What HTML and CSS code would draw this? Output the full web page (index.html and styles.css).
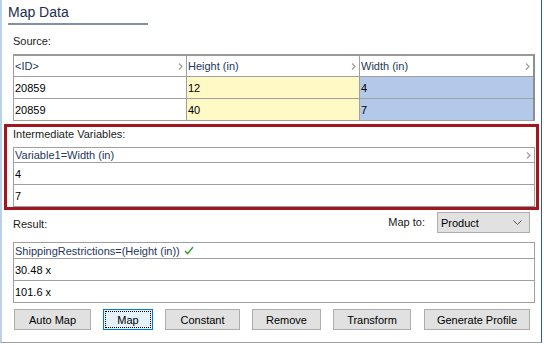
FILE: index.html
```html
<!DOCTYPE html>
<html>
<head>
<meta charset="utf-8">
<link rel="stylesheet" href="styles.css">
</head>
<body>
<div class="window">
  <div class="title">Map Data</div>
  <div class="label source-label">Source:</div>
  <div class="table source-table">
    <div class="row head-row">
      <div class="cell head"><span>&lt;ID&gt;</span><svg class="chev" width="5" height="7" viewBox="0 0 5 7"><polyline points="1,0.5 4,3.5 1,6.5" fill="none" stroke="#a0a0a0" stroke-width="1.3"/></svg></div>
      <div class="cell head"><span>Height (in)</span><svg class="chev" width="5" height="7" viewBox="0 0 5 7"><polyline points="1,0.5 4,3.5 1,6.5" fill="none" stroke="#a0a0a0" stroke-width="1.3"/></svg></div>
      <div class="cell head last"><span>Width (in)</span><svg class="chev" width="5" height="7" viewBox="0 0 5 7"><polyline points="1,0.5 4,3.5 1,6.5" fill="none" stroke="#a0a0a0" stroke-width="1.3"/></svg></div>
    </div>
    <div class="row">
      <div class="cell">20859</div>
      <div class="cell yellow">12</div>
      <div class="cell blue last">4</div>
    </div>
    <div class="row">
      <div class="cell">20859</div>
      <div class="cell yellow">40</div>
      <div class="cell blue last">7</div>
    </div>
  </div>

  <div class="inter-box">
    <div class="label inter-label">Intermediate Variables:</div>
    <div class="table single-table">
      <div class="row1 head-row small-head">
        <div class="cell head last"><span>Variable1=Width (in)</span><svg class="chev" width="5" height="7" viewBox="0 0 5 7"><polyline points="1,0.5 4,3.5 1,6.5" fill="none" stroke="#a0a0a0" stroke-width="1.3"/></svg></div>
      </div>
      <div class="row1"><div class="cell last">4</div></div>
      <div class="row1"><div class="cell last">7</div></div>
    </div>
  </div>

  <div class="result-bar">
    <div class="label result-label">Result:</div>
    <div class="label mapto-label">Map to:</div>
    <div class="dropdown">
      <span>Product</span>
      <svg width="9" height="5" viewBox="0 0 9 5"><polyline points="0.5,0.5 4.5,4.5 8.5,0.5" fill="none" stroke="#555" stroke-width="1"/></svg>
    </div>
  </div>

  <div class="table single-table result-table">
    <div class="row1 head-row small-head">
      <div class="cell head last"><span>ShippingRestrictions=(Height (in))</span><svg class="check" width="10" height="9" viewBox="0 0 10 9"><polyline points="1,5 3.6,7.6 9,1" fill="none" stroke="#3a9a3a" stroke-width="1.4"/></svg></div>
    </div>
    <div class="row1"><div class="cell last">30.48 x</div></div>
    <div class="row1"><div class="cell last">101.6 x</div></div>
  </div>

  <div class="buttons">
    <button class="btn b-auto">Auto Map</button>
    <button class="btn b-map focused"><span class="focus-ring">Map</span></button>
    <button class="btn b-const">Constant</button>
    <button class="btn b-remove">Remove</button>
    <button class="btn b-trans">Transform</button>
    <button class="btn b-gen">Generate Profile</button>
  </div>
</div>
</body>
</html>
```

FILE: styles.css
```css
html, body {
  margin: 0;
  padding: 0;
  background: #ffffff;
}
body {
  font-family: "Liberation Sans", Arial, sans-serif;
  font-size: 11px;
  color: #000;
}
.window {
  box-sizing: border-box;
  width: 542px;
  height: 343px;
  border-left: 2px solid #b9d1ea;
  border-right: 1px solid #2d5a9b;
  border-bottom: 1px solid #a0a0a0;
  display: flex;
  flex-direction: column;
  background: #fff;
}
.title {
  margin-left: 6px;
  width: 140px;
  height: 19px;
  padding-top: 4px;
  line-height: 16px;
  font-size: 14px;
  color: #1c2f4d;
  border-bottom: 2px solid #8191a6;
}
.label {
  line-height: 13px;
  color: #1a1a1a;
}
.source-label {
  margin-left: 11px;
  margin-top: 10px;
}
.table {
  box-sizing: border-box;
  margin-left: 11px;
  width: 522px;
  border: 1px solid #a0a0a0;
}
.source-table {
  margin-top: 6px;
  border-top: 2px solid #9a9a9a;
  border-right: 2px solid #8e8e8e;
}
.row {
  display: grid;
  grid-template-columns: 173px 173px 1fr;
  height: 21px;
  border-bottom: 1px solid #a0a0a0;
}
.row:last-child {
  border-bottom: none;
}
.source-table .head-row {
  height: 20px;
}
.cell {
  box-sizing: border-box;
  border-right: 1px solid #a0a0a0;
  display: flex;
  align-items: center;
  padding-left: 1px;
  white-space: nowrap;
}
.cell.last {
  border-right: none;
}
.cell.head {
  color: #23375c;
  justify-content: space-between;
  padding-right: 3px;
}
.yellow {
  background: #fff9c6;
}
.blue {
  background: #b2c9e9;
}
.inter-box {
  box-sizing: border-box;
  margin-top: 3px;
  margin-left: 2px;
  width: 535px;
  height: 86px;
  border: 3px solid #a2171f;
  padding: 1px 1px 0 6px;
}
.inter-box .table {
  margin-left: 0;
  margin-top: 6px;
}
.row1 {
  height: 21px;
  border-bottom: 1px solid #a0a0a0;
  display: flex;
}
.row1:last-child {
  border-bottom: none;
}
.row1 .cell {
  flex: 1;
}
.small-head {
  height: 14px;
}
.result-table .small-head {
  height: 15px;
}
.small-head .cell.head {
  justify-content: flex-start;
}
.inter-box .small-head .cell.head {
  justify-content: space-between;
}
.check {
  margin-left: 4px;
}
.result-bar {
  display: flex;
  align-items: center;
  margin-left: 11px;
  margin-top: 2px;
  width: 517px;
  height: 21px;
}
.result-label {
  margin-top: 4px;
}
.mapto-label {
  margin-left: auto;
  margin-right: 12px;
}
.dropdown {
  box-sizing: border-box;
  width: 93px;
  height: 21px;
  background: #e1e1e1;
  border: 1px solid #adadad;
  display: flex;
  align-items: center;
  justify-content: space-between;
  padding: 0 7px 0 3px;
  color: #000;
}
.result-table {
  margin-top: 9px;
}
.buttons {
  display: flex;
  margin-left: 12px;
  margin-top: 6px;
}
.btn {
  box-sizing: border-box;
  height: 21px;
  margin: 0 12px 0 0;
  padding: 0;
  background: #e1e1e1;
  border: 1px solid #adadad;
  font-family: "Liberation Sans", Arial, sans-serif;
  font-size: 11px;
  color: #000;
  display: flex;
  align-items: center;
  justify-content: center;
}
.b-auto { width: 77px; }
.b-map { width: 50px; }
.b-const { width: 75px; margin-right: 12px; }
.b-remove { width: 69px; }
.b-trans { width: 78px; margin-right: 13px; }
.b-gen { width: 106px; margin-right: 0; }
.focused {
  background: #e5f1fb;
  border-color: #0078d7;
  padding: 1px;
}
.focus-ring {
  box-sizing: border-box;
  flex: 1;
  align-self: stretch;
  border: 1px dotted #000;
  display: flex;
  align-items: center;
  justify-content: center;
}
```
